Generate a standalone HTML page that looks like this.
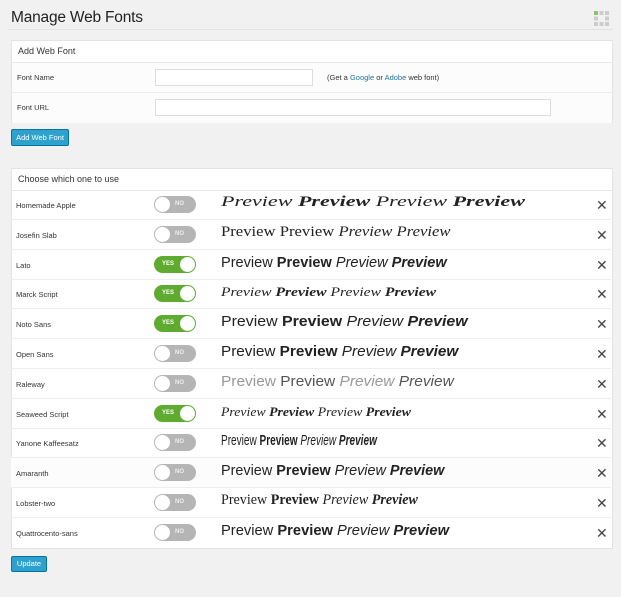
<!DOCTYPE html>
<html><head><meta charset="utf-8"><style>
*{box-sizing:border-box;margin:0;padding:0}
body{width:621px;height:597px;background:#f1f1f1;font-family:"Liberation Sans",sans-serif;color:#333;position:relative;overflow:hidden}
.abs{position:absolute}
h1{position:absolute;left:11px;top:9px;font-size:15.5px;font-weight:normal;color:#222;letter-spacing:-0.2px}
.hr{position:absolute;left:8px;top:29px;width:605px;height:1px;background:#e2e2e2}
.box{position:absolute;left:11px;width:602px;background:#fff;border:1px solid #e3e3e3}
.hd{height:22px;border-bottom:1px solid #e8e8e8;font-size:9px;line-height:21px;padding-left:6px;color:#333}
.fr{height:30px;border-bottom:1px solid #eee;position:relative;background:#fcfcfc;font-size:7.5px}
.fr .l{position:absolute;left:5px;top:10px}
.inp{position:absolute;left:143px;top:6px;height:17px;border:1px solid #ddd;background:#fff}
.btn{position:absolute;background:#2ea2cc;border:1px solid #0074a2;color:#fff;font-size:7.5px;border-radius:2px;text-align:center}
.row{position:absolute;left:0;width:600px;height:30px;border-bottom:1px solid #eee}
.row .n{position:absolute;left:5px;top:11px;font-size:7.5px}
.tg{position:absolute;left:143px;top:6px;width:42px;height:17px;border-radius:9px;background:#b5b5b5;font-size:6px;font-weight:bold;color:#eee}
.tg .k{position:absolute;top:1px;width:15px;height:15px;border-radius:50%;background:#fff}
.tg span{position:absolute;top:5px;line-height:7px;display:block}
.tg.n0 .k{left:1px}.tg.n0 span{left:21px}
.tg.y{background:#5eab2f}.tg.y .k{right:1px}.tg.y span{left:8px;color:#fff}
.pv{position:absolute;left:210px;top:4px;font-size:15px;white-space:nowrap;transform-origin:left center;color:#222}
.x{position:absolute;left:585px;top:7px;font-size:14px;color:#444}
</style></head><body>
<h1>Manage Web Fonts</h1>
<svg class="abs" style="left:594px;top:11px" width="16" height="15"><rect x="0" y="0" width="4" height="4" fill="#8cc46a"/><rect x="5.5" y="0" width="4" height="4" fill="#ccc"/><rect x="11" y="0" width="4" height="4" fill="#ccc"/><rect x="0" y="5.5" width="4" height="4" fill="#ccc"/><rect x="11" y="5.5" width="4" height="4" fill="#ccc"/><rect x="0" y="11" width="4" height="4" fill="#ccc"/><rect x="5.5" y="11" width="4" height="4" fill="#ccc"/><rect x="11" y="11" width="4" height="4" fill="#ccc"/></svg>
<div class="hr"></div>
<div class="box" style="top:40px;height:83px">
<div class="hd">Add Web Font</div>
<div class="fr"><span class="l">Font Name</span><div class="inp" style="width:158px"></div><span class="abs" style="left:315px;top:10px">(Get a <span style="color:#21759b">Google</span> or <span style="color:#21759b">Adobe</span> web font)</span></div>
<div class="fr" style="border-bottom:none"><span class="l">Font URL</span><div class="inp" style="width:396px"></div></div>
</div>
<div class="btn" style="left:11px;top:129px;width:58px;height:17px;line-height:15px">Add Web Font</div>
<div class="box" style="top:168px;height:381px">
<div class="hd">Choose which one to use</div>
</div>
<div class="btn" style="left:11px;top:556px;width:36px;height:16px;line-height:14px">Update</div>
<div class="abs" style="left:11px;top:190px;width:602px">
<div class="row" style="top:0"><span class="n">Homemade Apple</span><div class="tg n0"><div class="k"></div><span>NO</span></div><div class="pv" style="font-family:'Liberation Serif',serif;font-style:italic;transform:scaleX(1.47)">Preview <b>Preview</b> Preview <b>Preview</b></div><span class="x">✕</span></div>
<div class="row" style="top:29.8px"><span class="n">Josefin Slab</span><div class="tg n0"><div class="k"></div><span>NO</span></div><div class="pv" style="font-family:'Liberation Serif',serif;transform:scaleX(1.11)">Preview Preview <i>Preview</i> <i>Preview</i></div><span class="x">✕</span></div>
<div class="row" style="top:59.6px"><span class="n">Lato</span><div class="tg y"><div class="k"></div><span>YES</span></div><div class="pv" style="transform:scaleX(0.97)">Preview <b>Preview</b> <i>Preview</i> <b><i>Preview</i></b></div><span class="x">✕</span></div>
<div class="row" style="top:89.4px"><span class="n">Marck Script</span><div class="tg y"><div class="k"></div><span>YES</span></div><div class="pv" style="font-family:'Liberation Serif',serif;font-style:italic;font-size:13px;top:5px;transform:scaleX(1.2)">Preview <b>Preview</b> Preview <b>Preview</b></div><span class="x">✕</span></div>
<div class="row" style="top:119.2px"><span class="n">Noto Sans</span><div class="tg y"><div class="k"></div><span>YES</span></div><div class="pv" style="transform:scaleX(1.06)">Preview <b>Preview</b> <i>Preview</i> <b><i>Preview</i></b></div><span class="x">✕</span></div>
<div class="row" style="top:149px"><span class="n">Open Sans</span><div class="tg n0"><div class="k"></div><span>NO</span></div><div class="pv" style="transform:scaleX(1.02)">Preview <b>Preview</b> <i>Preview</i> <b><i>Preview</i></b></div><span class="x">✕</span></div>
<div class="row" style="top:178.8px"><span class="n">Raleway</span><div class="tg n0"><div class="k"></div><span>NO</span></div><div class="pv" style="color:#999;transform:scaleX(1.03)">Preview <span style="color:#555">Preview</span> <i>Preview</i> <i style="color:#555">Preview</i></div><span class="x">✕</span></div>
<div class="row" style="top:208.6px"><span class="n">Seaweed Script</span><div class="tg y"><div class="k"></div><span>YES</span></div><div class="pv" style="font-family:'Liberation Serif',serif;font-style:italic;font-size:13px;top:5px;transform:scaleX(1.06)">Preview <b>Preview</b> Preview <b>Preview</b></div><span class="x">✕</span></div>
<div class="row" style="top:238.4px"><span class="n">Yanone Kaffeesatz</span><div class="tg n0"><div class="k"></div><span>NO</span></div><div class="pv" style="transform:scaleX(0.67)">Preview <b>Preview</b> <i>Preview</i> <b><i>Preview</i></b></div><span class="x">✕</span></div>
<div class="row" style="top:268.2px;background:#fcfcfc"><span class="n">Amaranth</span><div class="tg n0"><div class="k"></div><span>NO</span></div><div class="pv" style="transform:scaleX(0.96)">Preview <b>Preview</b> <i>Preview</i> <b><i>Preview</i></b></div><span class="x">✕</span></div>
<div class="row" style="top:298px"><span class="n">Lobster-two</span><div class="tg n0"><div class="k"></div><span>NO</span></div><div class="pv" style="font-family:'Liberation Serif',serif;transform:scaleX(0.94)">Preview <b>Preview</b> <i>Preview</i> <b><i>Preview</i></b></div><span class="x">✕</span></div>
<div class="row" style="top:327.8px;border-bottom:none"><span class="n">Quattrocento-sans</span><div class="tg n0"><div class="k"></div><span>NO</span></div><div class="pv" style="transform:scaleX(0.98)">Preview <b>Preview</b> <i>Preview</i> <b><i>Preview</i></b></div><span class="x">✕</span></div>
</div>
</body></html>
